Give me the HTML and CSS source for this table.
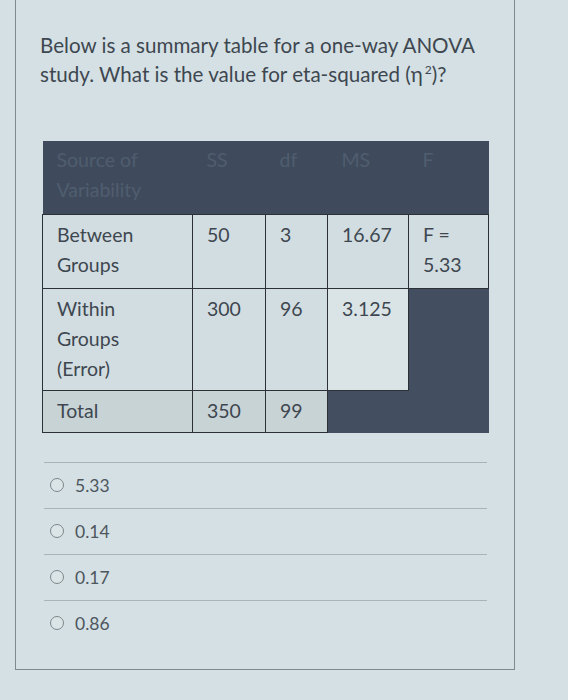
FILE: index.html
```html
<!DOCTYPE html>
<html>
<head>
<meta charset="utf-8">
<link rel="stylesheet" href="styles.css">
</head>
<body>
<div class="card">
  <p class="question">Below is a summary table for a one-way ANOVA study. What is the value for eta-squared (η<sup>2</sup>)?</p>
  <table class="anova">
    <colgroup>
      <col class="c1"><col class="c2"><col class="c3"><col class="c4"><col class="c5">
    </colgroup>
    <thead>
      <tr><th>Source of Variability</th><th>SS</th><th>df</th><th>MS</th><th>F</th></tr>
    </thead>
    <tbody>
      <tr class="r1"><td>Between Groups</td><td>50</td><td>3</td><td>16.67</td><td>F = 5.33</td></tr>
      <tr class="r2"><td>Within Groups (Error)</td><td>300</td><td>96</td><td class="light">3.125</td><td class="dark"></td></tr>
      <tr class="total"><td>Total</td><td>350</td><td>99</td><td class="dark"></td><td class="dark"></td></tr>
    </tbody>
  </table>
  <ul class="options">
    <li><span class="radio"></span>5.33</li>
    <li><span class="radio"></span>0.14</li>
    <li><span class="radio"></span>0.17</li>
    <li><span class="radio"></span>0.86</li>
  </ul>
</div>
</body>
</html>
```
FILE: styles.css
```css
html, body {
  margin: 0;
  padding: 0;
  background: #d4e0e4;
  font-family: Lato, "Noto Sans", sans-serif;
}
.card {
  margin-left: 15px;
  width: 500px;
  height: 670px;
  box-sizing: border-box;
  border: 1px solid #7f898e;
  border-top: none;
  padding: 31px 0 0 24px;
}
.question {
  margin: 0;
  width: 460px;
  font-size: 20.6px;
  line-height: 29px;
  color: #3e4750;
}
.question sup {
  font-size: 12px;
  line-height: 0;
  vertical-align: 8px;
  margin-left: 2px;
}
.anova {
  margin: 52px 0 0 2px;
  width: 446px;
  border-collapse: collapse;
  table-layout: fixed;
  font-size: 19.5px;
  line-height: 30px;
  color: #3e4750;
}
.c1 { width: 150px; }
.c2 { width: 73px; }
.c3 { width: 62px; }
.c4 { width: 81px; }
.c5 { width: 80px; }
.anova th {
  background: #3f4b5c;
  color: #4f5d6f;
  font-weight: normal;
  text-align: left;
  vertical-align: top;
  padding: 4px 8px 6px 14px;
  height: 73px;
  box-sizing: border-box;
}
.anova td {
  background: #d2dde1;
  border: 1px solid #2c3136;
  vertical-align: top;
  padding: 5px 14px 6px 14px;
}
.anova .r1 td { padding-bottom: 8px; }
.anova td:first-child { padding-right: 30px; }
.anova td.light { background: #dae4e7; }
.anova .total td { background: #c8d3d6; }
.anova td.dark, .anova .total td.dark {
  background: #434f61;
  border-color: #434f61;
}
.options {
  list-style: none;
  margin: 29px 0 0 4px;
  padding: 0;
  width: 443px;
}
.options li {
  border-top: 1px solid #a9b4b8;
  height: 45px;
  display: flex;
  align-items: center;
  gap: 11px;
  padding-left: 6px;
  font-size: 17.5px;
  color: #4e565d;
}
.radio {
  width: 12px;
  height: 12px;
  border: 1.5px solid #7d868b;
  border-radius: 50%;
  background: #dbe5e8;
}
```
